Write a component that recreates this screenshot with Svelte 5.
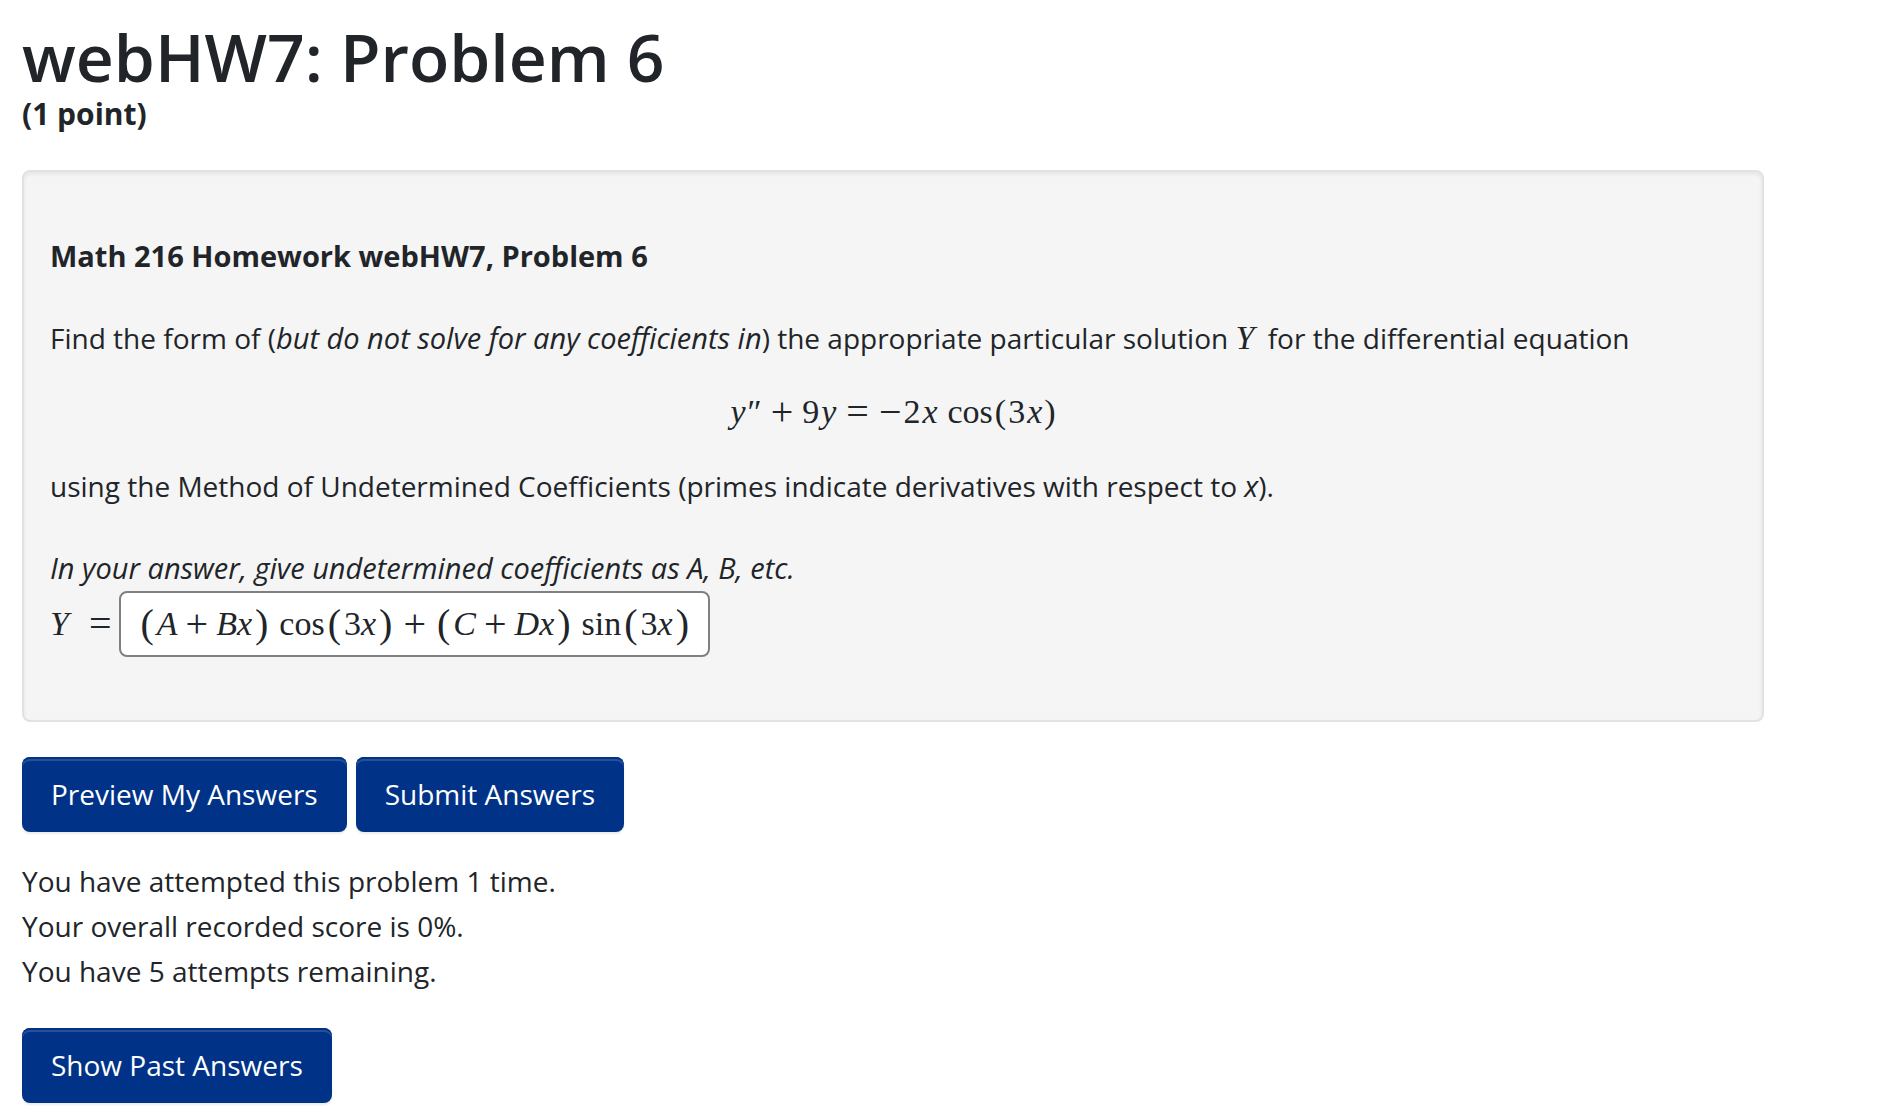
<script>
  // Problem page: statement, answer box, submit controls and attempt summary.
  const attempts = 1;
  const score = 0;
  const remaining = 5;

  let answer = $state('(A+Bx)cos(3x)+(C+Dx)sin(3x)');

  // split the answer into pieces so each can be typeset on its own
  const tokens = $derived(answer.match(/cos|sin|[()+\-]|[A-Za-z]|\d+/g) ?? []);

  function kind(t) {
    if (t === '(') return 'open';
    if (t === ')') return 'close';
    if (t === '+' || t === '-') return 'op';
    if (t === 'cos' || t === 'sin') return 'fn';
    return /\d/.test(t) ? 'num' : 'var';
  }
</script>

<main>
  <header>
    <h1>webHW7: Problem 6</h1>
    <strong>(1 point)</strong>
  </header>

  <form onsubmit={(e) => e.preventDefault()}>
    <section class="problem">
      <p><b>Math 216 Homework webHW7, Problem 6</b></p>
      <p>
        Find the form of (<i>but do not solve for any coefficients in</i>) the appropriate particular solution
        <span class="math"><i class="cap">Y</i></span>&nbsp;for the differential equation
      </p>
      <div class="math display">
        <i>y</i><span class="prime">″</span><span class="op">+</span><span>9</span><i>y</i><span class="rel">=</span><span class="neg">−</span><span>2</span><i>x</i><span class="fn">cos</span><span>(</span><span>3</span><i>x</i><span>)</span>
      </div>
      <p>using the Method of Undetermined Coefficients (primes indicate derivatives with respect to <i>x</i>).</p>
      <i>In your answer, give undetermined coefficients as A, B, etc.</i>
      <div class="row">
        <label class="math" for="ans1"><i class="cap">Y</i><span class="rel">=</span></label>
        <div class="field">
          <input id="ans1" type="text" autocomplete="off" spellcheck="false" bind:value={answer} />
          <div class="math typeset" aria-hidden="true">
            {#each tokens as t}<span class={kind(t)}>{t}</span>{/each}
          </div>
        </div>
      </div>
    </section>

    <div class="buttons">
      <button type="submit">Preview My Answers</button>
      <button type="submit">Submit Answers</button>
    </div>
  </form>

  <div class="summary">
    <div>You have attempted this problem {attempts} time.</div>
    <div>Your overall recorded score is {score}%.</div>
    <div>You have {remaining} attempts remaining.</div>
  </div>

  <button type="button">Show Past Answers</button>
</main>

<style>
  :global(body) {
    background: #fff;
    color: #212529;
    font: 28px/45px "Open Sans", "Noto Sans", sans-serif;
  }
  main { padding: 21px 22px 10px; }

  h1 {
    margin: 0;
    font-size: 66px;
    line-height: 70px;
    font-weight: 600;
  }
  header strong { display: block; font-size: 30px; }

  /* problem well */
  .problem {
    box-sizing: border-box;
    width: calc(100% - 114px);
    margin: 34px 0 35px;
    padding: 61px 26px 63px;
    border: 2px solid #e2e2e2;
    border-radius: 8px;
    background: #f5f5f5;
    box-shadow: inset 0 2px 4px rgba(0, 0, 0, 0.07);
  }
  .problem p { margin: 0 0 36px; }
  .problem b, .problem i { font-size: 29px; }

  /* math */
  .math {
    font-family: "Liberation Serif", serif;
    font-size: 34px;
    line-height: 30px;
  }
  .problem .math i { font-size: 34px; }
  .display {
    display: flex;
    justify-content: center;
    align-items: center;
    margin: 3px 0 36px;
    gap: 2px;
  }
  .op, .rel, .neg { font-size: 40px; }
  .op { margin: 0 7px; }
  .rel { margin: 0 8px; }
  .fn { margin-left: 8px; }
  .cap { margin-right: 6px; }

  .row { display: flex; align-items: center; }
  label {
    display: flex;
    align-items: center;
    gap: 6px;
  }
  .field { position: relative; }
  input {
    box-sizing: border-box;
    width: 591px;
    height: 66px;
    display: block;
    padding: 0 18px;
    border: 2px solid #808080;
    border-radius: 8px;
    background: #fff;
    color: transparent;
    caret-color: #212529;
    font: 34px "Liberation Serif", serif;
  }
  .typeset {
    position: absolute;
    inset: 0;
    display: flex;
    align-items: center;
    padding-left: 18px;
    pointer-events: none;
  }
  .typeset .var { font-style: italic; }
  .typeset .op { margin: 0 8px; }
  .typeset .open, .typeset .close {
    margin: 0 3px;
    font-size: 40px;
  }

  .buttons { display: flex; gap: 9px; }
  button {
    height: 75px;
    padding: 0 29px;
    border: 0;
    border-radius: 8px;
    background: #003388;
    color: #fff;
    font: inherit;
    box-shadow: inset 0 2px 0 #003388, inset 0 4px 0 rgba(255, 255, 255, 0.15), 0 2px 2px rgba(0, 0, 0, 0.08);
    cursor: pointer;
  }
  .summary { margin: 27px 0 34px; }
</style>
